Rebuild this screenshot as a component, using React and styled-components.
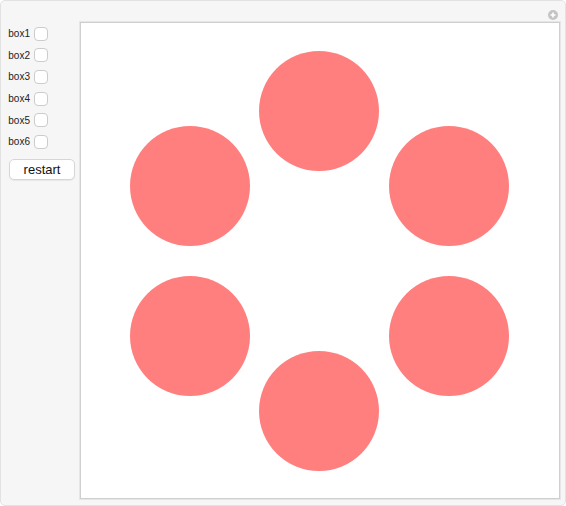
import React, { useState } from "react";
import styled, { createGlobalStyle } from "styled-components";

const GlobalStyle = createGlobalStyle`
  html, body {
    margin: 0;
    padding: 0;
    background: #ffffff;
  }
  body {
    font-family: "Liberation Sans", Arial, sans-serif;
  }
`;

const BOXES = ["box1", "box2", "box3", "box4", "box5", "box6"];

// circle centres, relative to the inside of the board
const CIRCLES = [
  { cx: 238, cy: 88 },
  { cx: 109, cy: 163 },
  { cx: 368, cy: 163 },
  { cx: 109, cy: 313 },
  { cx: 368, cy: 313 },
  { cx: 238, cy: 388 },
];

const Controls = ({ checked, onToggle, onRestart }) => {
  return (
    <ControlsWrapper>
      {BOXES.map((name, i) => (
        <BoxRow key={name}>
          <span>{name}</span>
          <CheckBox checked={checked[i]} onClick={() => onToggle(i)} />
        </BoxRow>
      ))}
      <RestartButton onClick={onRestart}>restart</RestartButton>
    </ControlsWrapper>
  );
};

const Board = () => {
  return (
    <Canvas>
      <svg width="478" height="475" viewBox="0 0 478 475">
        {CIRCLES.map((c, i) => (
          <circle key={i} cx={c.cx} cy={c.cy} r="60" fill="#ff7f7f" />
        ))}
      </svg>
    </Canvas>
  );
};

const App = () => {
  const [checked, setChecked] = useState(BOXES.map(() => false));

  const toggle = (i) =>
    setChecked((prev) => prev.map((v, j) => (j === i ? !v : v)));

  return (
    <>
      <GlobalStyle />
      <Frame>
        <PlusIcon>
          <svg width="10" height="10" viewBox="0 0 10 10">
            <circle cx="5" cy="5" r="5" fill="#c4c4c4" />
            <path d="M5 2.5v5M2.5 5h5" stroke="#fff" strokeWidth="1.6" />
          </svg>
        </PlusIcon>
        <Controls
          checked={checked}
          onToggle={toggle}
          onRestart={() => setChecked(BOXES.map(() => false))}
        />
        <Board />
      </Frame>
    </>
  );
};

export default App;

const Frame = styled.div`
  position: relative;
  box-sizing: border-box;
  width: 566px;
  height: 506px;
  display: flex;
  align-items: flex-start;
  gap: 6px;
  padding: 21px 5px 6px 1px;
  background: #f6f6f6;
  border: 1px solid #e2e2e2;
  border-radius: 5px;
`;

const PlusIcon = styled.div`
  position: absolute;
  top: 9px;
  right: 7px;
  line-height: 0;
`;

const ControlsWrapper = styled.div`
  width: 72px;
  display: flex;
  flex-direction: column;
  align-items: flex-end;
  padding-top: 1px;
`;

const BoxRow = styled.label`
  display: flex;
  align-items: center;
  gap: 4px;
  height: 21.6px;
  padding-right: 26px;
  font-size: 10px;
  color: #222;
`;

const CheckBox = styled.span`
  box-sizing: border-box;
  width: 14px;
  height: 14px;
  border: 1px solid #cccccc;
  border-radius: 4px;
  background: ${(p) => (p.checked ? "#4a90e2" : "#ffffff")};
  cursor: pointer;
`;

const RestartButton = styled.button`
  box-sizing: border-box;
  align-self: flex-start;
  margin: 6px 0 0 7px;
  width: 66px;
  height: 21px;
  padding: 0;
  background: #ffffff;
  border: 1px solid #d6d6d6;
  border-radius: 5px;
  font-family: "Liberation Sans", Arial, sans-serif;
  font-size: 13px;
  color: #111;
  box-shadow: 0 1px 1px rgba(0, 0, 0, 0.06);
`;

const Canvas = styled.div`
  box-sizing: border-box;
  width: 480px;
  height: 477px;
  background: #ffffff;
  border: 1px solid #cfcfcf;
  box-shadow: 0 0 0 1px #e6e6e6;
  line-height: 0;
`;
